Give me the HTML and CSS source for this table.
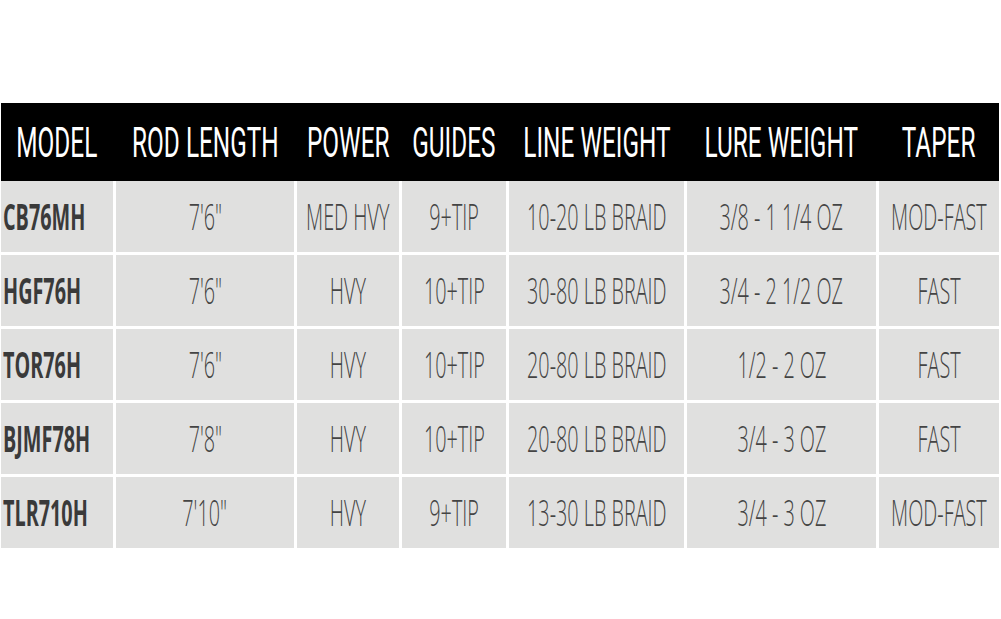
FILE: index.html
```html
<!DOCTYPE html>
<html lang="en">
<head>
<meta charset="utf-8">
<title>Rod Specs</title>
<link rel="stylesheet" href="styles.css">
</head>
<body>
<div class="table">
  <div class="head">
    <div class="hc"><span>MODEL</span></div>
    <div class="hc"><span>ROD LENGTH</span></div>
    <div class="hc"><span>POWER</span></div>
    <div class="hc"><span>GUIDES</span></div>
    <div class="hc"><span>LINE WEIGHT</span></div>
    <div class="hc"><span>LURE WEIGHT</span></div>
    <div class="hc"><span>TAPER</span></div>
  </div>
  <div class="body">
    <div class="c model"><span>CB76MH</span></div>
    <div class="c"><span>7'6"</span></div>
    <div class="c"><span>MED HVY</span></div>
    <div class="c"><span>9+TIP</span></div>
    <div class="c"><span>10-20 LB BRAID</span></div>
    <div class="c"><span>3/8 - 1 1/4 OZ</span></div>
    <div class="c"><span>MOD-FAST</span></div>

    <div class="c model"><span>HGF76H</span></div>
    <div class="c"><span>7'6"</span></div>
    <div class="c"><span>HVY</span></div>
    <div class="c"><span>10+TIP</span></div>
    <div class="c"><span>30-80 LB BRAID</span></div>
    <div class="c"><span>3/4 - 2 1/2 OZ</span></div>
    <div class="c"><span>FAST</span></div>

    <div class="c model"><span>TOR76H</span></div>
    <div class="c"><span>7'6"</span></div>
    <div class="c"><span>HVY</span></div>
    <div class="c"><span>10+TIP</span></div>
    <div class="c"><span>20-80 LB BRAID</span></div>
    <div class="c"><span>1/2 - 2 OZ</span></div>
    <div class="c"><span>FAST</span></div>

    <div class="c model"><span>BJMF78H</span></div>
    <div class="c"><span>7'8"</span></div>
    <div class="c"><span>HVY</span></div>
    <div class="c"><span>10+TIP</span></div>
    <div class="c"><span>20-80 LB BRAID</span></div>
    <div class="c"><span>3/4 - 3 OZ</span></div>
    <div class="c"><span>FAST</span></div>

    <div class="c model"><span>TLR710H</span></div>
    <div class="c"><span>7'10"</span></div>
    <div class="c"><span>HVY</span></div>
    <div class="c"><span>9+TIP</span></div>
    <div class="c"><span>13-30 LB BRAID</span></div>
    <div class="c"><span>3/4 - 3 OZ</span></div>
    <div class="c"><span>MOD-FAST</span></div>
  </div>
</div>
</body>
</html>
```

FILE: styles.css
```css
html, body {
  margin: 0;
  padding: 0;
  background: #ffffff;
}

body {
  padding: 103px 2px 0 1px;
  font-family: "Open Sans", "Liberation Sans", sans-serif;
}

.table {
  width: 998px;
}

.head,
.body {
  display: grid;
  grid-template-columns: 112px 178px 102px 104px 175px 189px 120px;
  column-gap: 3px;
}

.head {
  background: #000000;
  height: 78px;
}

.hc {
  display: flex;
  align-items: center;
  justify-content: center;
  color: #ffffff;
  font-family: Roboto, "Liberation Sans", sans-serif;
  font-weight: 400;
  font-size: 42px;
  white-space: nowrap;
}

.hc span {
  display: inline-block;
  transform: scaleX(0.58);
}

.body {
  grid-auto-rows: 71px;
  row-gap: 3px;
}

.c {
  display: flex;
  align-items: center;
  justify-content: center;
  background: #e0e0df;
  color: #444444;
  font-weight: 300;
  font-size: 36px;
  white-space: nowrap;
}

.c span {
  display: inline-block;
  transform: scaleX(0.55);
}

.c.model {
  justify-content: flex-start;
  color: #3a3a3a;
  font-weight: 700;
  font-size: 36px;
}

.c.model span {
  transform-origin: left center;
  transform: scaleX(0.55);
  margin-left: 2px;
}
```
